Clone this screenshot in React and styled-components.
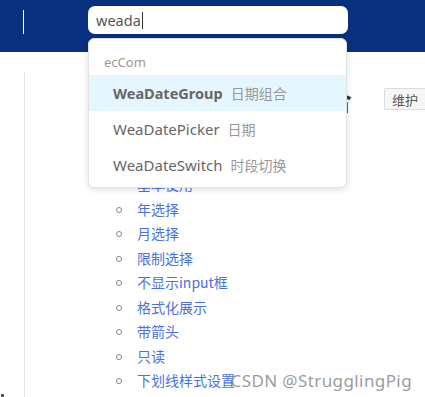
import styled, { createGlobalStyle } from 'styled-components';

const GlobalStyle = createGlobalStyle`
  html, body {
    margin: 0;
    padding: 0;
    background: #fff;
    font-family: "Noto Sans", "Noto Sans CJK SC", sans-serif;
    overflow: hidden;
  }
`;

const Page = styled.div`
  position: relative;
  width: 425px;
  height: 397px;
  overflow: hidden;
`;

const Header = styled.header`
  height: 52px;
  background: #08307f;
  display: flex;
  align-items: flex-start;
`;

const Divider = styled.div`
  width: 1px;
  height: 24px;
  margin: 10px 0 0 23px;
  background: #fff;
`;

const SearchBox = styled.div`
  position: relative;
  margin: 6px 0 0 64px;
  width: 260px;
`;

const SearchInput = styled.div`
  height: 28px;
  box-sizing: border-box;
  background: #fff;
  border-radius: 7px;
  padding: 0 8px;
  display: flex;
  align-items: center;
  font-size: 14.5px;
  color: #555;
`;

const Caret = styled.span`
  display: inline-block;
  width: 1px;
  height: 17px;
  background: #333;
  margin-left: 1px;
`;

const Dropdown = styled.div`
  position: absolute;
  top: 32px;
  left: 0;
  width: 259px;
  box-sizing: border-box;
  background: #fff;
  border: 1px solid #e2e2e2;
  border-radius: 6px;
  box-shadow: 0 2px 6px rgba(0, 0, 0, 0.12);
  padding: 10px 0 4px;
  z-index: 5;
`;

const GroupLabel = styled.div`
  padding-left: 15px;
  height: 26px;
  line-height: 26px;
  font-size: 13px;
  color: #999;
`;

const Option = styled.div`
  height: 36px;
  display: flex;
  align-items: center;
  padding-left: 24px;
  background: ${(p) => (p.$active ? '#e6f6fe' : 'transparent')};
`;

const OptionName = styled.span`
  font-size: ${(p) => (p.$active ? '14.5px' : '15px')};
  color: #666;
  font-weight: ${(p) => (p.$active ? 700 : 400)};
`;

const OptionDesc = styled.span`
  margin-left: 8px;
  font-size: 14px;
  color: #999;
  font-family: "Noto Sans CJK SC", sans-serif;
`;

const Body = styled.div`
  display: flex;
  height: 345px;
`;

const Sidebar = styled.div`
  width: 24px;
  margin-top: 20px;
  border-right: 1px solid #e4e4e4;
`;

const Content = styled.main`
  flex: 1;
  padding-top: 34px;
`;

const TitleRow = styled.div`
  display: flex;
  align-items: center;
  height: 26px;
`;

const Title = styled.h1`
  flex: 1;
  margin: 0;
  text-align: right;
  font-size: 26px;
  font-weight: 700;
  color: #333;
  white-space: nowrap;
  overflow: hidden;
  font-family: "Noto Sans CJK SC", sans-serif;
`;

const MaintainButton = styled.button`
  margin-left: 32px;
  height: 22px;
  padding: 0 7px;
  border: 1px solid #ddd;
  border-right: none;
  border-radius: 2px 0 0 2px;
  background: #f6f6f6;
  color: #555;
  font-size: 13px;
  font-family: "Noto Sans CJK SC", sans-serif;
  display: flex;
  align-items: center;
`;

const DemoList = styled.ul`
  list-style: none;
  margin: 60px 0 0;
  padding-left: 91px;
`;

const DemoItem = styled.li`
  position: relative;
  height: 24.55px;
  line-height: 24.55px;
  padding-left: 21px;
  font-size: 14px;
  color: #4a72dc;
  font-family: "Noto Sans CJK SC", sans-serif;

  &::before {
    content: '';
    position: absolute;
    left: 0;
    top: 10px;
    width: 4px;
    height: 4px;
    border: 1px solid #888;
    border-radius: 50%;
  }
`;

const Watermark = styled.div`
  position: absolute;
  right: 13px;
  bottom: 5px;
  font-size: 17px;
  color: rgba(120, 120, 120, 0.75);
  font-family: "Noto Sans", sans-serif;
  letter-spacing: 0.4px;
`;

const CornerMark = styled.div`
  position: absolute;
  left: 1px;
  bottom: 0;
  width: 3px;
  height: 3px;
  background: #555;
`;

const options = [
  { name: 'WeaDateGroup', desc: '日期组合', active: true },
  { name: 'WeaDatePicker', desc: '日期' },
  { name: 'WeaDateSwitch', desc: '时段切换' },
];

const demos = ['基本使用', '年选择', '月选择', '限制选择', '不显示input框', '格式化展示', '带箭头', '只读', '下划线样式设置'];

export default function App() {
  return (
    <Page>
      <GlobalStyle />
      <Header>
        <Divider />
        <SearchBox>
          <SearchInput>
            weada<Caret />
          </SearchInput>
          <Dropdown>
            <GroupLabel>ecCom</GroupLabel>
            {options.map((o) => (
              <Option key={o.name} $active={o.active}>
                <OptionName $active={o.active}>{o.name}</OptionName>
                <OptionDesc>{o.desc}</OptionDesc>
              </Option>
            ))}
          </Dropdown>
        </SearchBox>
      </Header>
      <Body>
        <Sidebar />
        <Content>
          <TitleRow>
            <Title>日期组合</Title>
            <MaintainButton>维护</MaintainButton>
          </TitleRow>
          <DemoList>
            {demos.map((d) => (
              <DemoItem key={d}>{d}</DemoItem>
            ))}
          </DemoList>
        </Content>
      </Body>
      <Watermark>CSDN @StrugglingPig</Watermark>
      <CornerMark />
    </Page>
  );
}
